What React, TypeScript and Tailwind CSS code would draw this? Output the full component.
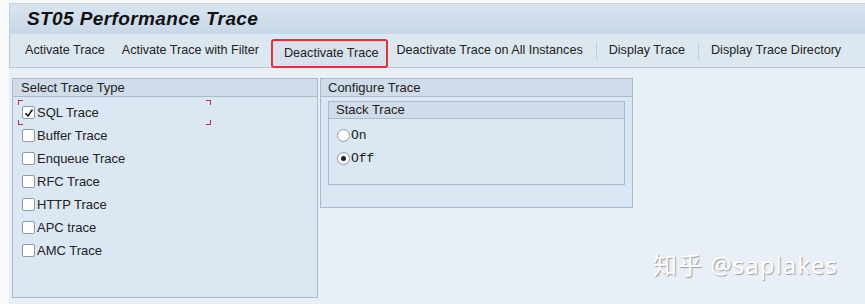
import React from 'react';

const font = { fontFamily: '"Liberation Sans", Arial, sans-serif' };

const traceTypes = ['SQL Trace', 'Buffer Trace', 'Enqueue Trace', 'RFC Trace', 'HTTP Trace', 'APC trace', 'AMC Trace'];

const Corner = ({ className }: { className: string }) => (
  <span className={`absolute w-[5px] h-[5px] border-[#b0304a] ${className}`} />
);

const CheckBox = ({ checked }: { checked?: boolean }) => (
  <span className="w-[13px] h-[13px] bg-white border border-[#8d9aa8] rounded-[2px] flex items-center justify-center shrink-0">
    {checked && (
      <svg width="10" height="10" viewBox="0 0 10 10">
        <path d="M1.5 5.2 L4 8 L8.5 1.5" fill="none" stroke="#1a1a1a" strokeWidth="1.6" />
      </svg>
    )}
  </span>
);

const Radio = ({ checked }: { checked?: boolean }) => (
  <span className="w-[13px] h-[13px] rounded-full bg-white border border-[#8d9aa8] flex items-center justify-center shrink-0">
    {checked && <span className="w-[5px] h-[5px] rounded-full bg-[#222]" />}
  </span>
);

export default function App() {
  const tools = ['Activate Trace', 'Activate Trace with Filter'];
  return (
    <div className="w-[865px] h-[304px] bg-[#f7f9fb] pl-[9px] pt-[3px] overflow-hidden relative text-[#222]" style={font}>
      <div className="h-[31px] bg-gradient-to-b from-[#d9e4ef] to-[#c8d8e8] border-t border-l border-[#c4d2e0] flex items-center pl-[17px]">
        <span className="text-[19px] font-bold italic text-[#111] tracking-[0.4px] whitespace-nowrap">ST05 Performance Trace</span>
      </div>
      <div className="h-[34px] bg-[#dde7f0] border-b border-l border-[#b9c9d8] flex items-center text-[12.6px] text-[#222] whitespace-nowrap">
        <div className="flex items-center pl-[15px] gap-[17px] shrink-0">
          {tools.map((t) => (
            <span key={t}>{t}</span>
          ))}
        </div>
        <div className="ml-[12px] h-[29px] mt-[5px] pl-[11px] pr-[8px] flex items-center border-2 border-[#e0323c] rounded-[3px] bg-[#d6e1ec] shrink-0">
          Deactivate Trace
        </div>
        <span className="ml-[8px] shrink-0">Deactivate Trace on All Instances</span>
        <span className="ml-[13px] w-px h-[18px] bg-[#c2ceda] shrink-0" />
        <span className="ml-[12px] shrink-0">Display Trace</span>
        <span className="ml-[13px] w-px h-[18px] bg-[#c2ceda] shrink-0" />
        <span className="ml-[12px] shrink-0">Display Trace Directory</span>
      </div>
      <div className="h-full bg-[#e8eff6] pt-[10px] pl-[3px] flex items-start gap-[2px] text-[13px]">
        <div className="w-[306px] h-[220px] border border-[#a8bbcd] bg-[#dbe7f2] flex flex-col">
          <div className="h-[18px] bg-[#d0dcea] border-b border-[#a8bbcd] flex items-center pl-[8px] text-[#222]">
            Select Trace Type
          </div>
          <div className="flex flex-col pt-[4px] pl-[9px]">
            {traceTypes.map((t, i) => (
              <div key={t} className="relative h-[23px] flex items-center gap-[2px] w-[189px]">
                {i === 0 && (
                  <>
                    <Corner className="-left-[4px] top-[-1px] border-t border-l" />
                    <Corner className="right-0 top-[-1px] border-t border-r" />
                    <Corner className="-left-[4px] bottom-[-1px] border-b border-l" />
                    <Corner className="right-0 bottom-[-1px] border-b border-r" />
                  </>
                )}
                <CheckBox checked={i === 0} />
                <span>{t}</span>
              </div>
            ))}
          </div>
        </div>
        <div className="w-[313px] h-[130px] border border-[#a8bbcd] bg-[#dbe7f2] flex flex-col">
          <div className="h-[18px] bg-[#d0dcea] border-b border-[#a8bbcd] flex items-center pl-[7px]">Configure Trace</div>
          <div className="mx-[7px] mt-[4px] h-[84px] border border-[#a8bbcd] bg-[#dbe7f2] flex flex-col">
            <div className="h-[17px] bg-[#d0dcea] border-b border-[#a8bbcd] flex items-center pl-[7px]">Stack Trace</div>
            <div className="flex flex-col pt-[5px] pl-[8px]" style={{ fontFamily: '"Liberation Mono", "Courier New", monospace' }}>
              {[
                ['On', false],
                ['Off', true],
              ].map(([l, c]) => (
                <div key={l as string} className="h-[23px] flex items-center gap-[1px]">
                  <Radio checked={c as boolean} />
                  <span>{l as string}</span>
                </div>
              ))}
            </div>
          </div>
        </div>
      </div>
      <div
        className="absolute left-[653px] top-[247px] text-[24px] text-white tracking-[1px] whitespace-nowrap"
        style={{ fontFamily: '"Noto Sans", "Noto Sans CJK SC", sans-serif', textShadow: '1px 1px 1px rgba(0,0,0,0.35)' }}
      >
        知乎 @saplakes
      </div>
    </div>
  );
}
